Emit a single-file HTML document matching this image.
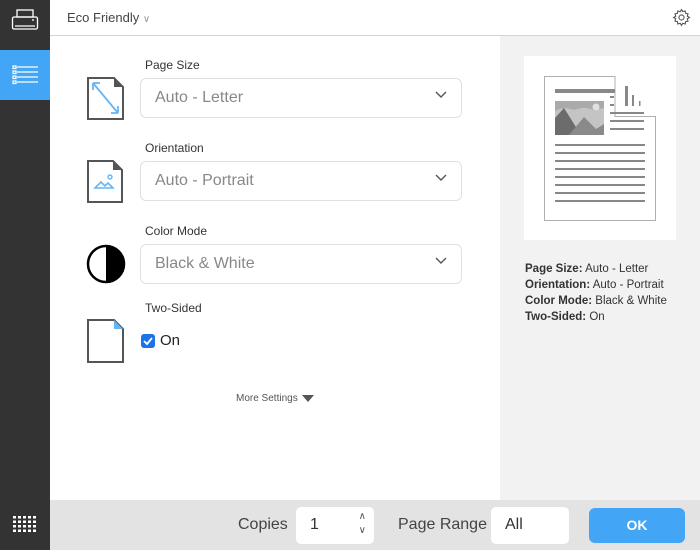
<!DOCTYPE html>
<html><head><style>
*{margin:0;padding:0;box-sizing:border-box}
body{width:700px;height:550px;position:relative;overflow:hidden;font-family:"Liberation Sans",sans-serif;background:#fff}
.abs{position:absolute}
.side{left:0;top:0;width:50px;height:550px;background:#333}
.sel{left:0;top:50px;width:50px;height:50px;background:#42a5f5}
.top{left:50px;top:0;width:650px;height:36px;border-bottom:1px solid #d4d4d4;background:#fff}
.right{left:500px;top:36px;width:200px;height:464px;background:#f2f2f2}
.bottom{left:50px;top:500px;width:650px;height:50px;background:#e3e3e3}
.lbl{font-size:12px;color:#333}
.sel-box{left:140px;width:322px;height:40px;border:1px solid #e0e0e0;border-radius:6px;font-size:16px;color:#888;padding:10px 14px}
.chev{position:absolute;right:14px;top:12px}
.info{font-size:11.5px;color:#333;line-height:16px}
.info b{font-weight:bold}
.field{background:#fff;border-radius:5px;height:37px;top:507px;font-size:16px;color:#333;padding:9px 0 0 14px}
</style></head><body>
<div class="abs side"></div>
<div class="abs sel"></div>
<svg class="abs" style="left:11px;top:9px" width="28" height="24" viewBox="0 0 28 24" fill="none" stroke="#fff" stroke-width="1.3"><rect x="6" y="1" width="16" height="7"/><rect x="1.5" y="8" width="25" height="12" rx="1.5"/><line x1="4" y1="17" x2="24" y2="17"/><line x1="21" y1="11" x2="23" y2="11"/></svg>
<svg class="abs" style="left:12px;top:64px" width="27" height="22" viewBox="0 0 27 22" fill="none" stroke="#fff" stroke-width="1.2"><rect x="1" y="2" width="3" height="2.5"/><rect x="1" y="7" width="3" height="2.5"/><rect x="1" y="12" width="3" height="2.5"/><rect x="1" y="17" width="3" height="2.5"/><line x1="5" y1="3" x2="26" y2="3"/><line x1="5" y1="8" x2="26" y2="8"/><line x1="5" y1="13" x2="26" y2="13"/><line x1="5" y1="18" x2="26" y2="18"/></svg>
<svg class="abs" style="left:13px;top:516px" width="24" height="17" viewBox="0 0 24 17" fill="#fff"><g id="r"><rect x="0" y="0" width="3" height="2.5"/><rect x="5" y="0" width="3" height="2.5"/><rect x="10" y="0" width="3" height="2.5"/><rect x="15" y="0" width="3" height="2.5"/><rect x="20" y="0" width="3" height="2.5"/></g><use href="#r" y="4.5"/><use href="#r" y="9"/><use href="#r" y="13.5"/></svg>
<div class="abs top"></div>
<div class="abs" style="left:67px;top:10px;font-size:13px;color:#444">Eco Friendly <span style="color:#999;font-size:10px">&#8744;</span></div>
<svg class="abs" style="left:672px;top:8px" width="19" height="19" viewBox="0 0 24 24" fill="none" stroke="#555" stroke-width="1.4"><circle cx="12" cy="12" r="3.2"/><path d="M12 2l1.6 2.6 3-.9.6 3 3 .6-.9 3L22 12l-2.7 1.6.9 3-3 .6-.6 3-3-.9L12 22l-1.6-2.7-3 .9-.6-3-3-.6.9-3L2 12l2.7-1.6-.9-3 3-.6.6-3 3 .9z"/></svg>
<div class="abs right"></div>
<div class="abs" style="left:524px;top:56px;width:152px;height:184px;background:#fff"></div>
<svg class="abs" style="left:544px;top:76px" width="112" height="145" viewBox="0 0 112 145">
<path d="M0.5 .5H71V40.5H111.5V144.5H0.5Z" fill="#fff" stroke="#b0b0b0"/>
<rect x="11" y="13" width="60" height="4" fill="#888"/>
<rect x="11" y="25" width="49" height="34" fill="#aaa"/>
<path d="M11 35 Q20 30 30 34 Q40 30 50 34 L60 32 V59 H11Z" fill="#c4c4c4"/>
<circle cx="52" cy="31" r="3.5" fill="#e0e0e0"/>
<path d="M11 59V42l9-10 17 27z" fill="#6c6c6c"/><path d="M25 59l15-18 12 12 8-5V59z" fill="#8a8a8a"/>
<g fill="#888"><rect x="66" y="36" width="34" height="2"/><rect x="66" y="44" width="34" height="2"/><rect x="66" y="52" width="34" height="2"/><rect x="66" y="28" width="4" height="2"/><rect x="66" y="20" width="4" height="2"/>
<rect x="11" y="68" width="90" height="2"/><rect x="11" y="76" width="90" height="2"/><rect x="11" y="84" width="90" height="2"/><rect x="11" y="92" width="90" height="2"/><rect x="11" y="100" width="90" height="2"/><rect x="11" y="108" width="90" height="2"/><rect x="11" y="116" width="90" height="2"/><rect x="11" y="124" width="90" height="2"/>
<rect x="81" y="10" width="3" height="20"/><rect x="88" y="19" width="2" height="11"/><rect x="95" y="25" width="1.5" height="5"/></g>
</svg>
<div class="abs info" style="left:525px;top:261px"><b>Page Size:</b> Auto - Letter<br><b>Orientation:</b> Auto - Portrait<br><b>Color Mode:</b> Black &amp; White<br><b>Two-Sided:</b> On</div>

<div class="abs lbl" style="left:145px;top:58px">Page Size</div>
<svg class="abs" style="left:87px;top:77px" width="38" height="43" viewBox="0 0 38 43" fill="none"><path d="M1 1H27L36 10V42H1Z" stroke="#555" stroke-width="2"/><path d="M27 1V10H36" fill="#555"/><path d="M27 1L36 10H27Z" fill="#555"/><path d="M6 6L31 36M6 6v7M6 6h7M31 36h-7M31 36v-7" stroke="#64b5f6" stroke-width="1.8"/></svg>
<div class="abs sel-box" style="top:78px">Auto - Letter<svg class="chev" width="12" height="8" viewBox="0 0 12 8"><path d="M1 1l5 5 5-5" stroke="#555" fill="none" stroke-width="1.4"/></svg></div>

<div class="abs lbl" style="left:145px;top:141px">Orientation</div>
<svg class="abs" style="left:87px;top:160px" width="38" height="43" viewBox="0 0 38 43" fill="none"><path d="M1 1H26L35 10V42H1Z" stroke="#555" stroke-width="2"/><path d="M26 1L35 10H26Z" fill="#555"/><path d="M8 28l6-6 4 4 3-3 5 5z" stroke="#64b5f6" stroke-width="1.6"/><circle cx="23" cy="17" r="2" stroke="#64b5f6" stroke-width="1.4"/></svg>
<div class="abs sel-box" style="top:161px">Auto - Portrait<svg class="chev" width="12" height="8" viewBox="0 0 12 8"><path d="M1 1l5 5 5-5" stroke="#555" fill="none" stroke-width="1.4"/></svg></div>

<div class="abs lbl" style="left:145px;top:224px">Color Mode</div>
<svg class="abs" style="left:86px;top:244px" width="40" height="40" viewBox="0 0 40 40"><circle cx="20" cy="20" r="18" fill="#fff" stroke="#000" stroke-width="2.5"/><path d="M20 2A18 18 0 0 1 20 38Z" fill="#000"/></svg>
<div class="abs sel-box" style="top:244px">Black &amp; White<svg class="chev" width="12" height="8" viewBox="0 0 12 8"><path d="M1 1l5 5 5-5" stroke="#555" fill="none" stroke-width="1.4"/></svg></div>

<div class="abs lbl" style="left:145px;top:301px">Two-Sided</div>
<svg class="abs" style="left:87px;top:319px" width="38" height="44" viewBox="0 0 38 44" fill="none"><path d="M1 1H27L36 10V43H1Z" stroke="#555" stroke-width="2"/><path d="M27 1L36 10H27Z" fill="#64b5f6"/></svg>
<div class="abs" style="left:141px;top:334px;width:14px;height:14px;background:#1a73e8;border-radius:3px"><svg width="14" height="14" viewBox="0 0 14 14"><path d="M3 7l3 3 5-6" stroke="#fff" stroke-width="1.8" fill="none"/></svg></div>
<div class="abs" style="left:160px;top:332px;font-size:15px;color:#222">On</div>

<div class="abs" style="left:236px;top:393px;font-size:10px;color:#555">More Settings <span style="display:inline-block;width:0;height:0;border-left:6px solid transparent;border-right:6px solid transparent;border-top:7px solid #555;vertical-align:middle;margin-left:2px"></span></div>

<div class="abs bottom"></div>
<div class="abs" style="left:238px;top:516px;font-size:16px;color:#444">Copies</div>
<div class="abs field" style="left:296px;width:78px">1<span style="position:absolute;right:8px;top:3px;font-size:10px;color:#555;line-height:14px">&#8743;<br>&#8744;</span></div>
<div class="abs" style="left:398px;top:516px;font-size:16px;color:#444">Page Range</div>
<div class="abs field" style="left:491px;width:78px;top:507px">All</div>
<div class="abs" style="left:589px;top:508px;width:96px;height:35px;background:#42a5f5;border-radius:6px;color:#fff;font-weight:bold;font-size:14px;text-align:center;line-height:35px">OK</div>
</body></html>
